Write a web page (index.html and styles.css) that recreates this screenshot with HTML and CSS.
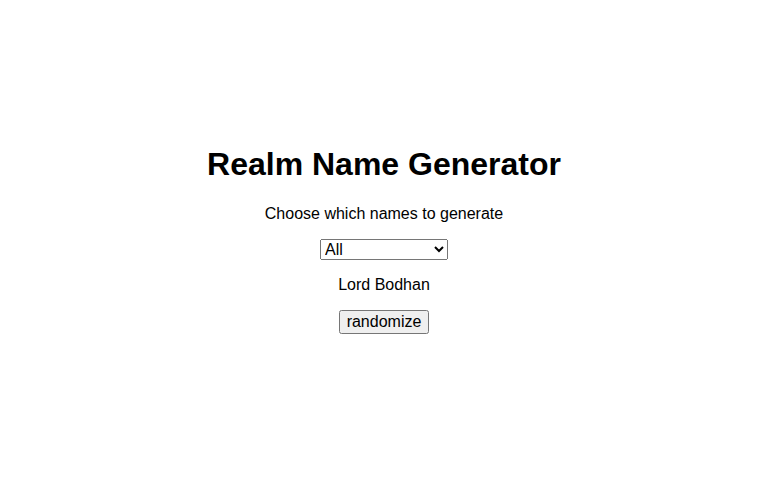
FILE: index.html
```html
<!DOCTYPE html>
<html lang="en">
<head>
    <meta charset="UTF-8">
    <meta name="viewport" content="width=device-width, initial-scale=1.0">
    <title>Realm Name Generator</title>
    <link rel="stylesheet" href="styles.css">
</head>
<body>
    <div class="container">
        <h1>Realm Name Generator</h1>
        <p class="label">Choose which names to generate</p>
        <select id="nameType" class="name-type">
            <option>All</option>
            <option>Lords</option>
            <option>Realms</option>
        </select>
        <p id="result" class="result">Lord Bodhan</p>
        <button id="randomBtn">randomize</button>
    </div>
</body>
</html>
```

FILE: styles.css
```css
body {
    font-family: "Liberation Sans", Arial, sans-serif;
    margin: 0;
    height: 100vh;
    display: flex;
    justify-content: center;
    align-items: center;
}

.container {
    display: flex;
    flex-direction: column;
    align-items: center;
    text-align: center;
}

h1 {
    font-size: 32px;
    margin: 0 0 22px;
}

.label {
    font-size: 16px;
    margin: 0 0 16px;
}

.name-type {
    font-family: inherit;
    font-size: 16px;
    width: 128px;
}

.result {
    font-size: 16px;
    margin: 16px 0;
}

button {
    font-family: inherit;
    font-size: 16px;
}
```
